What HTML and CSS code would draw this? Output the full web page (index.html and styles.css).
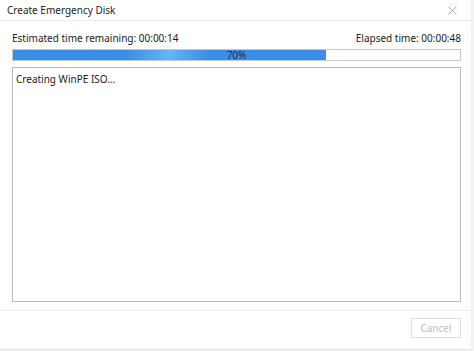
FILE: index.html
```html
<!DOCTYPE html>
<html>
<head>
<meta charset="utf-8">
<link rel="stylesheet" href="styles.css">
</head>
<body>
<div class="dialog">
  <div class="titlebar">
    <span class="title">Create Emergency Disk</span>
    <svg class="close" width="9" height="9" viewBox="0 0 9 9"><path d="M0.5 0.5L8.5 8.5M8.5 0.5L0.5 8.5" stroke="#a8a8a8" stroke-width="1" fill="none"/></svg>
  </div>
  <div class="content">
    <div class="times">
      <span>Estimated time remaining: 00:00:14</span>
      <span>Elapsed time: 00:00:48</span>
    </div>
    <div class="progress">
      <div class="fill" style="width:70%"></div>
      <span class="pct">70%</span>
    </div>
    <div class="log">Creating WinPE ISO...</div>
  </div>
  <div class="footer">
    <button class="cancel">Cancel</button>
  </div>
</div>
</body>
</html>
```
FILE: styles.css
```css
html, body { margin: 0; padding: 0; background: #f2f2f2; }
body { width: 474px; height: 351px; overflow: hidden; font-family: "Noto Sans", "Open Sans", sans-serif; font-size: 10px; color: #1a1a1a; }
.dialog { width: 471px; height: 350px; background: #fff; border-bottom: 1px solid #e4e4e4; box-sizing: border-box; display: flex; flex-direction: column; }
.titlebar { height: 21px; border-bottom: 1px solid #ececec; display: flex; align-items: center; justify-content: space-between; padding: 0 14px 0 7px; box-sizing: border-box; flex-shrink: 0; }
.title { color: #222; }
.close { display: block; }
.content { padding: 8px 10px 0 12px; display: flex; flex-direction: column; }
.times { display: flex; justify-content: space-between; height: 18px; align-items: center; }
.progress { margin-top: 2px; height: 12px; border: 1px solid #c8c8c8; box-sizing: border-box; position: relative; background: #fff; }
.fill { height: 100%; background: linear-gradient(90deg, #3b8ee8 0%, #3b8ee8 36%, #62b6f2 50%, #3b8ee8 62%, #3b8ee8 100%); }
.pct { position: absolute; left: 0; right: 0; top: -3px; text-align: center; color: #1b2d52; line-height: 16px; }
.log { margin-top: 6px; height: 235px; border: 1px solid #b9b9b9; box-sizing: border-box; padding: 4px 3px; }
.footer { margin-top: 8px; border-top: 1px solid #ececec; flex: 1; display: flex; justify-content: flex-end; align-items: flex-start; padding: 7px 10px 0 0; }
.cancel { width: 50px; height: 20px; border: 1px solid #e0e0e0; background: #fff; color: #bdbdbd; font-family: inherit; font-size: 10px; padding: 0; }
```
